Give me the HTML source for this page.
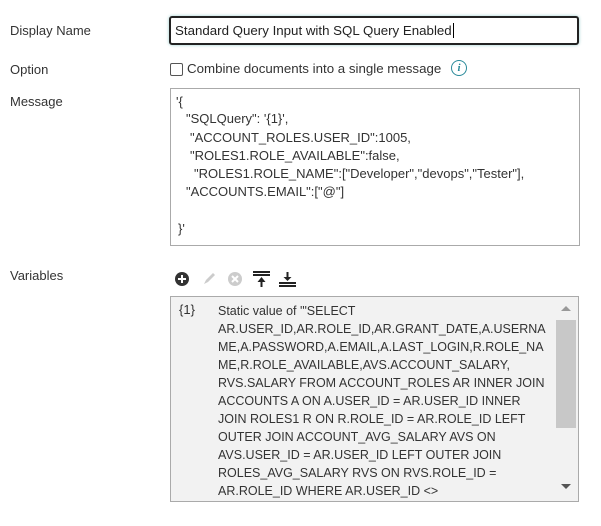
<!DOCTYPE html>
<html><head><style>
body{margin:0;width:601px;height:526px;background:#fff;font-family:"Liberation Sans",sans-serif;font-size:13px;color:#333;position:relative;overflow:hidden}
.a{position:absolute;white-space:nowrap}
.lbl{left:10px;color:#333}
</style></head><body>
<div class="a lbl" style="top:23px">Display Name</div>
<div class="a lbl" style="top:62px">Option</div>
<div class="a lbl" style="top:94px">Message</div>
<div class="a lbl" style="top:268px">Variables</div>

<div class="a" style="left:169px;top:16px;width:406px;height:25px;border:2px solid #222;border-radius:3px;box-shadow:0 0 3px #9cc"></div>
<div class="a" style="left:175px;top:23px;color:#222;font-size:13.3px">Standard Query Input with SQL Query Enabled<span style="border-left:1px solid #000;margin-left:1px"></span></div>

<div class="a" style="left:170px;top:63px;width:11px;height:11px;border:1px solid #555;border-radius:2px"></div>
<div class="a" style="left:187px;top:61px;font-size:13.3px">Combine documents into a single message</div>
<div class="a" style="left:451px;top:60px;width:14px;height:14px;border:1px solid #2a8a9a;border-radius:50%;color:#2a8a9a;font:italic bold 11px 'Liberation Serif',serif;text-align:center;line-height:14px">i</div>

<div class="a" style="left:170px;top:88px;width:408px;height:156px;border:1px solid #aaa"></div>
<div class="a" style="left:176px;top:94px">'{</div>
<div class="a" style="left:186px;top:111px">"SQLQuery": '{1}',</div>
<div class="a" style="left:190px;top:130px">"ACCOUNT_ROLES.USER_ID":1005,</div>
<div class="a" style="left:190px;top:148px">"ROLES1.ROLE_AVAILABLE":false,</div>
<div class="a" style="left:194px;top:166px">"ROLES1.ROLE_NAME":["Developer","devops","Tester"],</div>
<div class="a" style="left:186px;top:184px">"ACCOUNTS.EMAIL":["@"]</div>
<div class="a" style="left:178px;top:221px">}'</div>

<svg class="a" style="left:174px;top:270px" width="125" height="20">
<circle cx="8" cy="9" r="7" fill="#333"/><path d="M8 5v8M4 9h8" stroke="#fff" stroke-width="2"/>
<path d="M30 14l2-4 7-7 2 2-7 7z" fill="#ccc"/>
<circle cx="61" cy="9" r="7" fill="#ccc"/><path d="M58 6l6 6M64 6l-6 6" stroke="#fff" stroke-width="2"/>
<path d="M79 2h17M79 5h17" stroke="#222" stroke-width="2"/><path d="M87.5 7l-4 5h3v5h2v-5h3z" fill="#222"/>
<path d="M105 13h17M105 16h17" stroke="#222" stroke-width="2"/><path d="M112.5 2v5h-3l4 4 4-4h-3V2z" fill="#222"/>
</svg>

<div class="a" style="left:170px;top:296px;width:407px;height:204px;border:1px solid #aaa;background:#f2f2f2"></div>
<div class="a" style="left:556px;top:320px;width:20px;height:108px;background:#c8c8c8"></div>
<svg class="a" style="left:560px;top:305px" width="12" height="8"><path d="M1 6l5-5 5 5z" fill="#999"/></svg>
<svg class="a" style="left:560px;top:483px" width="12" height="8"><path d="M1 1l5 5 5-5z" fill="#555"/></svg>
<div class="a" style="left:179px;top:302px">{1}</div>
<div class="a" style="left:218px;top:302px;line-height:18px;font-size:12.5px">Static value of '"SELECT<br>AR.USER_ID,AR.ROLE_ID,AR.GRANT_DATE,A.USERNA<br>ME,A.PASSWORD,A.EMAIL,A.LAST_LOGIN,R.ROLE_NA<br>ME,R.ROLE_AVAILABLE,AVS.ACCOUNT_SALARY,<br>RVS.SALARY FROM ACCOUNT_ROLES AR INNER JOIN<br>ACCOUNTS A ON A.USER_ID = AR.USER_ID INNER<br>JOIN ROLES1 R ON R.ROLE_ID = AR.ROLE_ID LEFT<br>OUTER JOIN ACCOUNT_AVG_SALARY AVS ON<br>AVS.USER_ID = AR.USER_ID LEFT OUTER JOIN<br>ROLES_AVG_SALARY RVS ON RVS.ROLE_ID =<br>AR.ROLE_ID WHERE AR.USER_ID &lt;&gt;</div>
</body></html>
